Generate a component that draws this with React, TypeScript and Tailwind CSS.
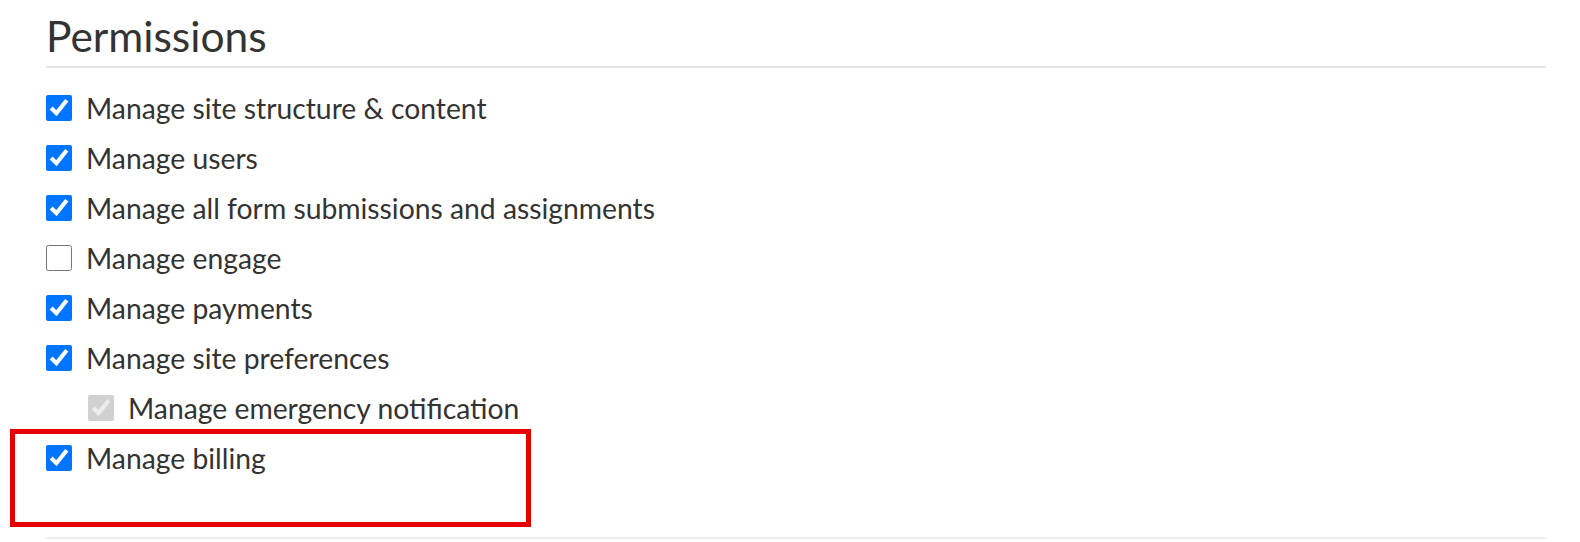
import React from "react";

type Row = { label: string; checked: boolean; disabled?: boolean; indent?: boolean };

const rows: Row[] = [
  { label: "Manage site structure & content", checked: true },
  { label: "Manage users", checked: true },
  { label: "Manage all form submissions and assignments", checked: true },
  { label: "Manage engage", checked: false },
  { label: "Manage payments", checked: true },
  { label: "Manage site preferences", checked: true },
  { label: "Manage emergency notification", checked: true, disabled: true, indent: true },
  { label: "Manage billing", checked: true },
];

export default function App() {
  return (
    <div
      className="relative w-[1580px] h-[542px] bg-white overflow-hidden text-[#333]"
      style={{ fontFamily: "Lato, 'Open Sans', sans-serif" }}
    >
      <div className="pl-[46px] pr-[34px] pt-[11px]">
        <h2 className="text-[42.5px] leading-[50px] font-normal pb-[5px] border-b-2 border-[#e6e6e6]">
          Permissions
        </h2>
        <div className="pt-[15px] pb-[54px] border-b-2 border-[#eeeeee]">
          {rows.map((r) => (
            <label
              key={r.label}
              className={`flex items-center h-[50px] gap-[14px] ${r.indent ? "pl-[42px]" : ""}`}
            >
              <input
                type="checkbox"
                readOnly
                checked={r.checked}
                disabled={r.disabled}
                className="w-[26px] h-[26px] m-0 accent-[#0075ff] shrink-0"
              />
              <span className="text-[28.3px] leading-[50px]">{r.label}</span>
            </label>
          ))}
        </div>
      </div>
      <div className="absolute left-[10px] top-[429px] w-[521px] h-[98px] border-[5px] border-[#e60000]" />
    </div>
  );
}
